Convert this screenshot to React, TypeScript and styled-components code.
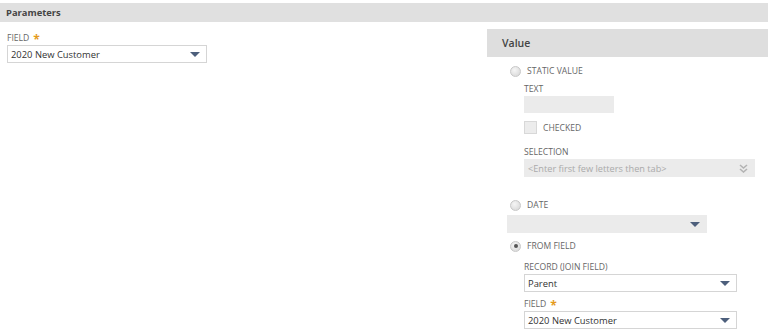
import styled, { createGlobalStyle } from "styled-components";

const GlobalStyle = createGlobalStyle`
  body {
    margin: 0;
    background: #fff;
    font-family: "Open Sans", "Liberation Sans", sans-serif;
    color: #333;
  }
`;

const Page = styled.div`
  width: 768px;
  height: 335px;
  overflow: hidden;
  padding-top: 3px;
  box-sizing: border-box;
`;

const SectionBar = styled.div`
  height: 19px;
  background: #e0e0e0;
  display: flex;
  align-items: center;
  padding-left: 6px;
  font-size: 9.4px;
  font-weight: 700;
  color: #444;
`;

const Columns = styled.div`
  display: flex;
  justify-content: space-between;
`;

const LeftCol = styled.div`
  padding: 11px 0 0 7px;
  width: 200px;
`;

const RightCol = styled.div`
  width: 281px;
  padding-top: 7px;
`;

const PanelHeader = styled.div`
  height: 28px;
  background: #dedede;
  display: flex;
  align-items: center;
  padding-left: 15px;
  font-size: 10.5px;
  font-weight: 600;
  color: #444;
`;

const PanelBody = styled.div`
  padding: 8px 0 0 37px;
`;

const Label = styled.div`
  font-size: 8.6px;
  color: #666;
  text-transform: uppercase;
  height: 11px;
  line-height: 11px;
  margin-bottom: 1px;
  display: flex;
  align-items: center;
  gap: 4px;
`;

const Star = styled.span`
  color: #e59b1d;
  font-size: 12px;
  font-weight: 700;
  line-height: 11px;
  position: relative;
  top: 1px;
`;

const Select = styled.div<{ $width: number; $disabled?: boolean }>`
  width: ${({ $width }) => $width}px;
  height: 18px;
  box-sizing: border-box;
  border: 1px solid ${({ $disabled }) => ($disabled ? "#ebebeb" : "#d5d5d5")};
  background: ${({ $disabled }) => ($disabled ? "#ebebeb" : "#fff")};
  display: flex;
  align-items: center;
  justify-content: space-between;
  padding: 0 6px 0 3px;
  font-size: 9.4px;
  color: #333;
`;

const Placeholder = styled.span`
  color: #aaa;
  font-size: 9.2px;
`;

const Arrow = () => (
  <svg width="10" height="5" viewBox="0 0 10 5">
    <path d="M0 0 H10 L5 5 Z" fill="#4d5f7c" />
  </svg>
);

const DoubleChevron = () => (
  <svg width="9" height="9" viewBox="0 0 9 9">
    <path d="M1 1 L4.5 4 L8 1 M1 5 L4.5 8 L8 5" fill="none" stroke="#b3b3b3" strokeWidth="1.6" />
  </svg>
);

const RadioRow = styled.div`
  display: flex;
  align-items: center;
  gap: 6px;
  font-size: 8.6px;
  color: #666;
  margin-left: -14px;
  height: 12px;
`;

const RadioDot = styled.span<{ $checked?: boolean }>`
  width: 9px;
  height: 9px;
  border-radius: 50%;
  border: 1px solid #c8c8c8;
  background: radial-gradient(circle at 40% 35%, #f6f6f6, #d4d4d4);
  display: flex;
  align-items: center;
  justify-content: center;
  &::after {
    content: "";
    width: 4px;
    height: 4px;
    border-radius: 50%;
    background: ${({ $checked }) => ($checked ? "#555" : "transparent")};
  }
`;

const SubGroup = styled.div<{ $mt: number }>`
  margin-top: ${({ $mt }) => $mt}px;
`;

const TextBox = styled.div`
  width: 90px;
  height: 17px;
  background: #ebebeb;
`;

const CheckRow = styled.div`
  display: flex;
  align-items: center;
  gap: 6px;
  margin-top: 8px;
  font-size: 8.6px;
  color: #666;
`;

const CheckBox = styled.span`
  width: 11px;
  height: 11px;
  border: 1px solid #d8d8d8;
  background: #ececec;
`;

const DateWrap = styled.div`
  margin-left: -17px;
  margin-top: 4px;
`;

export default function App() {
  return (
    <Page>
      <GlobalStyle />
      <SectionBar>Parameters</SectionBar>
      <Columns>
        <LeftCol>
          <Label>
            Field <Star>*</Star>
          </Label>
          <Select $width={200}>
            2020 New Customer
            <Arrow />
          </Select>
        </LeftCol>
        <RightCol>
          <PanelHeader>Value</PanelHeader>
          <PanelBody>
            <RadioRow>
              <RadioDot />
              STATIC VALUE
            </RadioRow>
            <SubGroup $mt={7}>
              <Label>Text</Label>
              <TextBox />
              <CheckRow>
                <CheckBox />
                CHECKED
              </CheckRow>
            </SubGroup>
            <SubGroup $mt={13}>
              <Label>Selection</Label>
              <Select $width={231} $disabled>
                <Placeholder>&lt;Enter first few letters then tab&gt;</Placeholder>
                <DoubleChevron />
              </Select>
            </SubGroup>
            <SubGroup $mt={22}>
              <RadioRow>
                <RadioDot />
                DATE
              </RadioRow>
              <DateWrap>
                <Select $width={200} $disabled>
                  <span />
                  <Arrow />
                </Select>
              </DateWrap>
            </SubGroup>
            <SubGroup $mt={7}>
              <RadioRow>
                <RadioDot $checked />
                FROM FIELD
              </RadioRow>
            </SubGroup>
            <SubGroup $mt={10}>
              <Label>Record (Join Field)</Label>
              <Select $width={213}>
                Parent
                <Arrow />
              </Select>
            </SubGroup>
            <SubGroup $mt={7}>
              <Label>
                Field <Star>*</Star>
              </Label>
              <Select $width={213}>
                2020 New Customer
                <Arrow />
              </Select>
            </SubGroup>
          </PanelBody>
        </RightCol>
      </Columns>
    </Page>
  );
}
